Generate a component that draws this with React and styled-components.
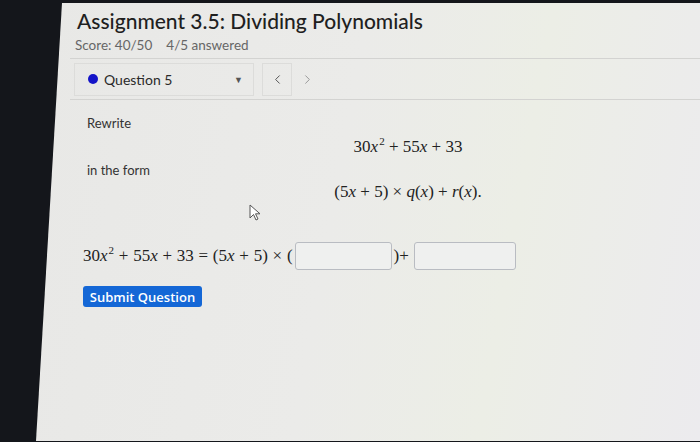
import React from "react";
import styled, { createGlobalStyle } from "styled-components";
import { ChevronLeft, ChevronRight } from "lucide-react";

const Global = createGlobalStyle`
  html, body { margin: 0; padding: 0; }
  body { background: #14161b; font-family: Lato, "Open Sans", sans-serif; }
`;

const Page = styled.div`
  width: 700px;
  height: 442px;
  display: flex;
  overflow: hidden;
  background: #14161b;
`;

const Screen = styled.div`
  flex: 1;
  margin: 3px 0 1px 36px;
  background: linear-gradient(100deg, #e8e8e6 0%, #ebebe9 45%, #eceee6 70%, #ecebee 100%);
  clip-path: polygon(26px 0, 100% 0, 100% 100%, 0 100%);
  display: flex;
  flex-direction: column;
`;

const Header = styled.div`
  padding: 5px 0 0 41px;
  height: 55px;
  box-sizing: border-box;
`;

const Title = styled.h1`
  margin: 0;
  font-family: Lato, sans-serif;
  font-weight: 500;
  font-size: 21px;
  line-height: 26px;
  color: #1f1f1f;
`;

const Meta = styled.div`
  display: flex;
  gap: 14px;
  font-size: 13.5px;
  line-height: 20px;
  color: #666;
  margin: 1px 0 0 -2px;
`;

const Toolbar = styled.div`
  margin-left: 34px;
  height: 42px;
  box-sizing: border-box;
  border-top: 1px solid #d3d3d1;
  border-bottom: 1px solid #d3d3d1;
  display: flex;
  align-items: center;
  gap: 8px;
  padding-left: 4px;
`;

const Select = styled.div`
  width: 180px;
  height: 33px;
  box-sizing: border-box;
  border: 1px solid #dcdcda;
  display: flex;
  align-items: center;
  padding: 0 10px 0 13px;
  gap: 6px;
  font-size: 14px;
  color: #2a2a2a;
`;

const Dot = styled.span`
  width: 10px;
  height: 10px;
  border-radius: 50%;
  background: #1414c8;
`;

const Caret = styled.span`
  margin-left: auto;
  font-size: 9px;
  color: #555;
`;

const NavBox = styled.div`
  display: flex;
  align-items: center;
`;

const NavButton = styled.div`
  width: 30px;
  height: 33px;
  box-sizing: border-box;
  border: 1px solid ${({ $boxed }) => ($boxed ? "#dcdcda" : "transparent")};
  display: flex;
  align-items: center;
  justify-content: center;
  color: ${({ $boxed }) => ($boxed ? "#555" : "#999")};
`;

const Body = styled.div`
  padding: 15px 0 0 51px;
  position: relative;
`;

const Text = styled.div`
  font-size: 13px;
  line-height: 16px;
  color: #333;
  margin-top: ${({ $mt = 0 }) => $mt}px;
`;

const Display = styled.div`
  font-family: "Liberation Serif", "DejaVu Serif", serif;
  font-size: 17px;
  line-height: 20px;
  color: #222;
  width: 300px;
  text-align: center;
  margin: ${({ $mt }) => $mt}px 0 0 171px;
`;

const V = styled.i`
  font-style: italic;
`;

const Sup = styled.span`
  font-size: 11px;
  line-height: 0;
  position: relative;
  top: -7px;
  margin-left: 1px;
`;

const Answer = styled.div`
  display: flex;
  align-items: center;
  height: 28px;
  margin: 40px 0 0 -4px;
  font-family: "Liberation Serif", "DejaVu Serif", serif;
  font-size: 17px;
  color: #222;
  white-space: pre;
  word-spacing: 0.5px;
`;

const Input = styled.div`
  width: ${({ $w }) => $w}px;
  height: 28px;
  box-sizing: border-box;
  border: 1px solid #b9bcc2;
  border-radius: 3px;
  background: #eff0ef;
  margin: 0 2px 0 ${({ $ml = 2 }) => $ml}px;
`;

const Submit = styled.button`
  display: block;
  margin: 16px 0 0 -4px;
  width: 119px;
  height: 21px;
  border: 0;
  border-radius: 3px;
  background: #1467d6;
  color: #fff;
  font-family: "Open Sans", sans-serif;
  font-weight: 600;
  font-size: 13px;
  padding: 0;
`;

const Cursor = styled.svg`
  position: absolute;
  left: 213px;
  top: 104px;
`;

const Poly = () => (
  <span>
    30<V>x</V>
    <Sup>2</Sup> + 55<V>x</V> + 33
  </span>
);

export default function App() {
  return (
    <Page>
      <Global />
      <Screen>
        <Header>
          <Title>Assignment 3.5: Dividing Polynomials</Title>
          <Meta>
            <span>Score: 40/50</span>
            <span>4/5 answered</span>
          </Meta>
        </Header>
        <Toolbar>
          <Select>
            <Dot />
            Question 5
            <Caret>▼</Caret>
          </Select>
          <NavBox>
            <NavButton $boxed>
              <ChevronLeft size={15} strokeWidth={1.6} />
            </NavButton>
            <NavButton>
              <ChevronRight size={15} strokeWidth={1.6} />
            </NavButton>
          </NavBox>
        </Toolbar>
        <Body>
          <Text>Rewrite</Text>
          <Display $mt={6}>
            <Poly />
          </Display>
          <Text $mt={5}>in the form</Text>
          <Display $mt={4}>
            (5<V>x</V> + 5) × <V>q</V>(<V>x</V>) + <V>r</V>(<V>x</V>).
          </Display>
          <Cursor width="14" height="18" viewBox="0 0 14 18">
            <path d="M1 1 L1 14 L4.5 10.5 L7 16 L9 15 L6.5 9.8 L11 9.8 Z" fill="#fff" stroke="#555" strokeWidth="1" />
          </Cursor>
          <Answer>
            <Poly />
            <span> = (5<V>x</V> + 5) × (</span>
            <Input $w={97} $ml={2} />
            <span>)+</span>
            <Input $w={102} $ml={5} />
          </Answer>
          <Submit>Submit Question</Submit>
        </Body>
      </Screen>
    </Page>
  );
}
